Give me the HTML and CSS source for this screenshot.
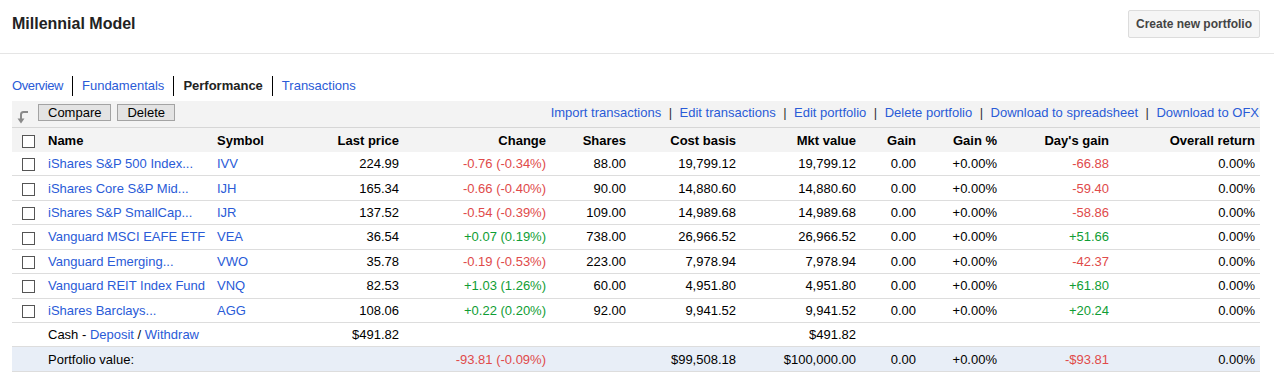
FILE: index.html
```html
<!DOCTYPE html>
<html lang="en">
<head>
  <meta charset="UTF-8">
  <title>Millennial Model - Performance</title>
  <link rel="stylesheet" href="styles.css">
</head>
<body>
  <div class="top">
    <h1 class="title">Millennial Model</h1>
    <button class="create-btn">Create new portfolio</button>
  </div>

  <div class="wrap">
    <div class="tabs">
      <a class="tab link">Overview</a>
      <a class="tab link">Fundamentals</a>
      <span class="tab current">Performance</span>
      <a class="tab link">Transactions</a>
    </div>

    <div class="toolbar">
      <svg class="arrow" width="12" height="14" viewBox="0 0 12 14">
        <path d="M11 2 H6.5 Q4 2 4 4.5 V9" fill="none" stroke="#8a8a8a" stroke-width="2"/>
        <polygon points="0.5,8.5 7.5,8.5 4,13.5" fill="#8a8a8a"/>
      </svg>
      <button class="tool-btn">Compare</button>
      <button class="tool-btn">Delete</button>
      <div class="actions">
        <a class="link">Import transactions</a><span class="sep">|</span><a class="link">Edit transactions</a><span class="sep">|</span><a class="link">Edit portfolio</a><span class="sep">|</span><a class="link">Delete portfolio</a><span class="sep">|</span><a class="link">Download to spreadsheet</a><span class="sep">|</span><a class="link">Download to OFX</a>
      </div>
    </div>

    <table class="holdings">
      <colgroup>
        <col style="width:32px"><col style="width:169px"><col style="width:77px"><col style="width:113px">
        <col style="width:147px"><col style="width:80px"><col style="width:110px"><col style="width:120px">
        <col style="width:60px"><col style="width:81px"><col style="width:112px"><col style="width:147px">
      </colgroup>
      <thead>
        <tr>
          <th class="c"><span class="cb"></span></th>
          <th class="l">Name</th>
          <th class="l">Symbol</th>
          <th>Last price</th>
          <th>Change</th>
          <th>Shares</th>
          <th>Cost basis</th>
          <th>Mkt value</th>
          <th>Gain</th>
          <th>Gain %</th>
          <th>Day's gain</th>
          <th>Overall return</th>
        </tr>
      </thead>
      <tbody>
        <tr>
          <td class="c"><span class="cb"></span></td>
          <td class="l"><a class="link">iShares S&amp;P 500 Index...</a></td>
          <td class="l"><a class="link">IVV</a></td>
          <td>224.99</td>
          <td class="neg">-0.76 (-0.34%)</td>
          <td>88.00</td>
          <td>19,799.12</td>
          <td>19,799.12</td>
          <td>0.00</td>
          <td>+0.00%</td>
          <td class="neg">-66.88</td>
          <td>0.00%</td>
        </tr>
        <tr>
          <td class="c"><span class="cb"></span></td>
          <td class="l"><a class="link">iShares Core S&amp;P Mid...</a></td>
          <td class="l"><a class="link">IJH</a></td>
          <td>165.34</td>
          <td class="neg">-0.66 (-0.40%)</td>
          <td>90.00</td>
          <td>14,880.60</td>
          <td>14,880.60</td>
          <td>0.00</td>
          <td>+0.00%</td>
          <td class="neg">-59.40</td>
          <td>0.00%</td>
        </tr>
        <tr>
          <td class="c"><span class="cb"></span></td>
          <td class="l"><a class="link">iShares S&amp;P SmallCap...</a></td>
          <td class="l"><a class="link">IJR</a></td>
          <td>137.52</td>
          <td class="neg">-0.54 (-0.39%)</td>
          <td>109.00</td>
          <td>14,989.68</td>
          <td>14,989.68</td>
          <td>0.00</td>
          <td>+0.00%</td>
          <td class="neg">-58.86</td>
          <td>0.00%</td>
        </tr>
        <tr>
          <td class="c"><span class="cb"></span></td>
          <td class="l"><a class="link">Vanguard MSCI EAFE ETF</a></td>
          <td class="l"><a class="link">VEA</a></td>
          <td>36.54</td>
          <td class="pos">+0.07 (0.19%)</td>
          <td>738.00</td>
          <td>26,966.52</td>
          <td>26,966.52</td>
          <td>0.00</td>
          <td>+0.00%</td>
          <td class="pos">+51.66</td>
          <td>0.00%</td>
        </tr>
        <tr>
          <td class="c"><span class="cb"></span></td>
          <td class="l"><a class="link">Vanguard Emerging...</a></td>
          <td class="l"><a class="link">VWO</a></td>
          <td>35.78</td>
          <td class="neg">-0.19 (-0.53%)</td>
          <td>223.00</td>
          <td>7,978.94</td>
          <td>7,978.94</td>
          <td>0.00</td>
          <td>+0.00%</td>
          <td class="neg">-42.37</td>
          <td>0.00%</td>
        </tr>
        <tr>
          <td class="c"><span class="cb"></span></td>
          <td class="l"><a class="link">Vanguard REIT Index Fund</a></td>
          <td class="l"><a class="link">VNQ</a></td>
          <td>82.53</td>
          <td class="pos">+1.03 (1.26%)</td>
          <td>60.00</td>
          <td>4,951.80</td>
          <td>4,951.80</td>
          <td>0.00</td>
          <td>+0.00%</td>
          <td class="pos">+61.80</td>
          <td>0.00%</td>
        </tr>
        <tr>
          <td class="c"><span class="cb"></span></td>
          <td class="l"><a class="link">iShares Barclays...</a></td>
          <td class="l"><a class="link">AGG</a></td>
          <td>108.06</td>
          <td class="pos">+0.22 (0.20%)</td>
          <td>92.00</td>
          <td>9,941.52</td>
          <td>9,941.52</td>
          <td>0.00</td>
          <td>+0.00%</td>
          <td class="pos">+20.24</td>
          <td>0.00%</td>
        </tr>
        <tr>
          <td></td>
          <td class="l" colspan="2">Cash - <a class="link">Deposit</a> / <a class="link">Withdraw</a></td>
          <td>$491.82</td>
          <td></td>
          <td></td>
          <td></td>
          <td>$491.82</td>
          <td></td>
          <td></td>
          <td></td>
          <td></td>
        </tr>
        <tr class="total">
          <td></td>
          <td class="l" colspan="2">Portfolio value:</td>
          <td></td>
          <td class="neg">-93.81 (-0.09%)</td>
          <td></td>
          <td>$99,508.18</td>
          <td>$100,000.00</td>
          <td>0.00</td>
          <td>+0.00%</td>
          <td class="neg">-$93.81</td>
          <td>0.00%</td>
        </tr>
      </tbody>
    </table>
  </div>
</body>
</html>
```

FILE: styles.css
```css
body { margin: 0; font-family: "Liberation Sans", Arial, sans-serif; font-size: 13px; color: #000; background: #fff; }
.link { color: #2a5bd7; text-decoration: none; cursor: pointer; }

.top { display: flex; justify-content: space-between; align-items: flex-start; height: 43px; padding: 10px 14px 0 12px; border-bottom: 1px solid #e5e5e5; }
.title { margin: 0; font-size: 16px; line-height: 28px; color: #222; font-weight: bold; }
.create-btn { width: 132px; height: 28px; padding: 0; font-family: inherit; font-size: 12px; font-weight: bold; color: #444; background: #f5f5f5; border: 1px solid #dcdcdc; border-radius: 2px; }

.wrap { padding: 0 14px 0 12px; }

.tabs { display: flex; margin-top: 22px; height: 20px; line-height: 20px; }
.tab { padding: 0 9px; border-left: 1px solid #000; }
.tab:first-child { padding-left: 0; border-left: none; letter-spacing: -0.4px; }
.tab.current { font-weight: bold; color: #222; }

.toolbar { display: flex; align-items: flex-start; height: 23px; padding-top: 3px; margin-top: 5px; background: #f3f3f3; border-bottom: 1px solid #d6d6d6; }
.arrow { margin: 6px 0 0 5px; }
.tool-btn { height: 17px; margin-left: 9px; padding: 0 9px; font-family: inherit; font-size: 13px; line-height: 15px; color: #000; background: #e3e3e3; border: 1px solid #a3a3a3; }
.tool-btn + .tool-btn { margin-left: 6px; }
.actions { margin-left: auto; padding-right: 1px; line-height: 17px; }
.sep { color: #333; padding: 0 7.5px; }

.holdings { width: 1248px; table-layout: fixed; border-collapse: collapse; }
.holdings th, .holdings td { padding: 0 4px; text-align: right; white-space: nowrap; overflow: hidden; }
.holdings th { height: 24px; background: #f3f3f3; font-weight: bold; }
.holdings td { height: 23.43px; border-bottom: 1px solid #dddddd; }
.holdings .l { text-align: left; }
.holdings .c { text-align: center; padding: 0; }
.holdings th:last-child, .holdings td:last-child { padding-right: 5px; }
.cb { display: inline-block; width: 11px; height: 11px; border: 1px solid #555; background: #fff; vertical-align: middle; }
.neg { color: #e04a4a; }
.pos { color: #0f9d34; }
.total td { background: #e8eef7; }
```
